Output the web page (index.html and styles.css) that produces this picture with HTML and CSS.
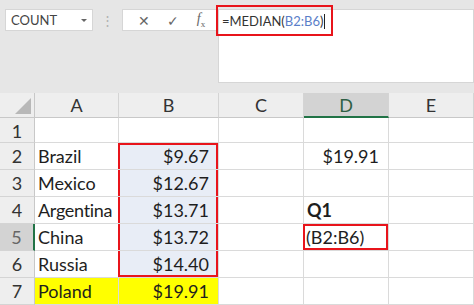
FILE: index.html
```html
<!DOCTYPE html>
<html lang="en">
<head>
    <meta charset="UTF-8">
    <title>Median</title>
    <link rel="stylesheet" href="styles.css">
</head>
<body>

<div class="toolbar">
    <div class="namebox">
        <span>COUNT</span>
        <span class="caret"></span>
    </div>
    <div class="grip">⋮</div>
    <div class="fbuttons">
        <span class="fbtn">✕</span>
        <span class="fbtn check">✓</span>
        <span class="fbtn fx"><i>f</i><sub>x</sub></span>
    </div>
    <div class="formula">
        <div class="formula-text">=MEDIAN(<span class="ref">B2:B6</span>)<span class="cursor"></span></div>
    </div>
</div>

<div class="sheet">
    <div class="corner"><span class="tri"></span></div>
    <div class="colhead">A</div>
    <div class="colhead">B</div>
    <div class="colhead">C</div>
    <div class="colhead active">D</div>
    <div class="colhead">E</div>

    <div class="rowhead">1</div>
    <div class="cell"></div><div class="cell"></div><div class="cell"></div><div class="cell"></div><div class="cell"></div>

    <div class="rowhead">2</div>
    <div class="cell">Brazil</div><div class="cell num sel first">$9.67</div><div class="cell"></div><div class="cell num">$19.91</div><div class="cell"></div>

    <div class="rowhead">3</div>
    <div class="cell">Mexico</div><div class="cell num sel">$12.67</div><div class="cell"></div><div class="cell"></div><div class="cell"></div>

    <div class="rowhead">4</div>
    <div class="cell long">Argentina</div><div class="cell num sel">$13.71</div><div class="cell"></div><div class="cell bold">Q1</div><div class="cell"></div>

    <div class="rowhead active">5</div>
    <div class="cell">China</div><div class="cell num sel">$13.72</div><div class="cell"></div><div class="cell current">(B2:B6)</div><div class="cell"></div>

    <div class="rowhead">6</div>
    <div class="cell">Russia</div><div class="cell num sel last">$14.40</div><div class="cell"></div><div class="cell"></div><div class="cell"></div>

    <div class="rowhead">7</div>
    <div class="cell yellow">Poland</div><div class="cell num yellow">$19.91</div><div class="cell"></div><div class="cell"></div><div class="cell"></div>
</div>

</body>
</html>
```

FILE: styles.css
```css
:root {
    --bar-bg: #e6e6e6;
    --head-bg: #eeeeee;
    --grid: #dadada;
    --red: #e8141b;
    --green: #217346;
}

* {
    box-sizing: border-box;
}

body {
    margin: 0;
    width: 474px;
    height: 305px;
    overflow: hidden;
    font-family: Lato, 'Open Sans', sans-serif;
    color: #1e1e1e;
    background: var(--bar-bg);
}

/* formula bar */
.toolbar {
    display: flex;
    align-items: flex-start;
    height: 93px;
    padding-top: 9px;
    padding-left: 5px;
}

.namebox {
    width: 88px;
    height: 22px;
    background: #fff;
    border: 1px solid #d6d6d6;
    display: flex;
    align-items: center;
    justify-content: space-between;
    padding: 0 5px 0 5px;
    font-size: 13px;
    color: #444;
}

.caret {
    width: 0;
    height: 0;
    border-left: 3px solid transparent;
    border-right: 3px solid transparent;
    border-top: 3px solid #666;
}

.grip {
    width: 29px;
    text-align: center;
    color: #b0b0b0;
    font-size: 13px;
    line-height: 22px;
}

.fbuttons {
    width: 96px;
    height: 22px;
    background: #fff;
    border: 1px solid #d6d6d6;
    border-right: none;
    display: flex;
    align-items: center;
    justify-content: space-around;
    padding: 0 4px 0 6px;
    color: #666;
    font-size: 14px;
}

.fbtn.fx {
    font-family: 'Liberation Serif', serif;
    font-size: 14px;
}

.fbtn.fx sub {
    font-size: 9px;
}

.formula {
    flex: 1;
    height: 74px;
    background: #fff;
    border: 1px solid #d6d6d6;
}

.formula-text {
    display: inline-block;
    margin: -5px 0 0 -3px;
    height: 31px;
    border: 2px solid var(--red);
    padding: 6px 6px 0 4px;
    font-size: 13px;
    color: #333;
}

.ref {
    color: #5a7ec9;
}

.cursor {
    display: inline-block;
    width: 1px;
    height: 15px;
    background: #222;
    vertical-align: -3px;
    margin-left: 1px;
}

/* sheet grid */
.sheet {
    display: grid;
    grid-template-columns: 35px 84px 100px 85px 85px 85px;
    grid-template-rows: 25px 25px repeat(6, 27px);
    background: #fff;
    font-size: 18px;
}

.corner {
    background: var(--head-bg);
    border-right: 1px solid #c8c8c8;
    border-bottom: 1px solid #c8c8c8;
    position: relative;
}

.tri {
    position: absolute;
    right: 3px;
    bottom: 3px;
    width: 0;
    height: 0;
    border-left: 16px solid transparent;
    border-bottom: 16px solid #b8b8b8;
}

.colhead {
    background: var(--head-bg);
    border-right: 1px solid #d4d4d4;
    border-bottom: 1px solid #c8c8c8;
    text-align: center;
    line-height: 24px;
    color: #333;
}

.colhead.active {
    background: #d3d3d3;
    border-bottom: 2px solid var(--green);
    color: #2f5f45;
}

.rowhead {
    background: var(--head-bg);
    border-right: 1px solid #c8c8c8;
    border-bottom: 1px solid #d4d4d4;
    line-height: 26px;
    text-align: center;
    color: #333;
}

.rowhead.active {
    background: #d3d3d3;
    border-right: 2px solid var(--green);
    color: #666;
}

.cell {
    border-right: 1px solid var(--grid);
    border-bottom: 1px solid var(--grid);
    padding: 0 3px;
    line-height: 26px;
    white-space: nowrap;
    overflow: hidden;
}

.cell.num {
    text-align: right;
    padding-right: 9px;
}

/* selected range B2:B6 with its red frame */
.cell.sel {
    background: #e8edf6;
    margin-left: -1px;
    box-shadow: inset 2px 0 0 var(--red), inset -2px 0 0 var(--red);
}

.cell.sel.first {
    box-shadow: inset 2px 0 0 var(--red), inset -2px 0 0 var(--red), inset 0 2px 0 var(--red);
}

.cell.sel.last {
    box-shadow: inset 2px 0 0 var(--red), inset -2px 0 0 var(--red), inset 0 -2px 0 var(--red);
}

.cell.bold {
    font-weight: bold;
}

.cell.yellow {
    background: #ffff00;
}

.cell.current {
    margin-left: -1px;
    box-shadow: inset 0 0 0 2px var(--red);
}

.cell.long {
    letter-spacing: -0.3px;
}
```
